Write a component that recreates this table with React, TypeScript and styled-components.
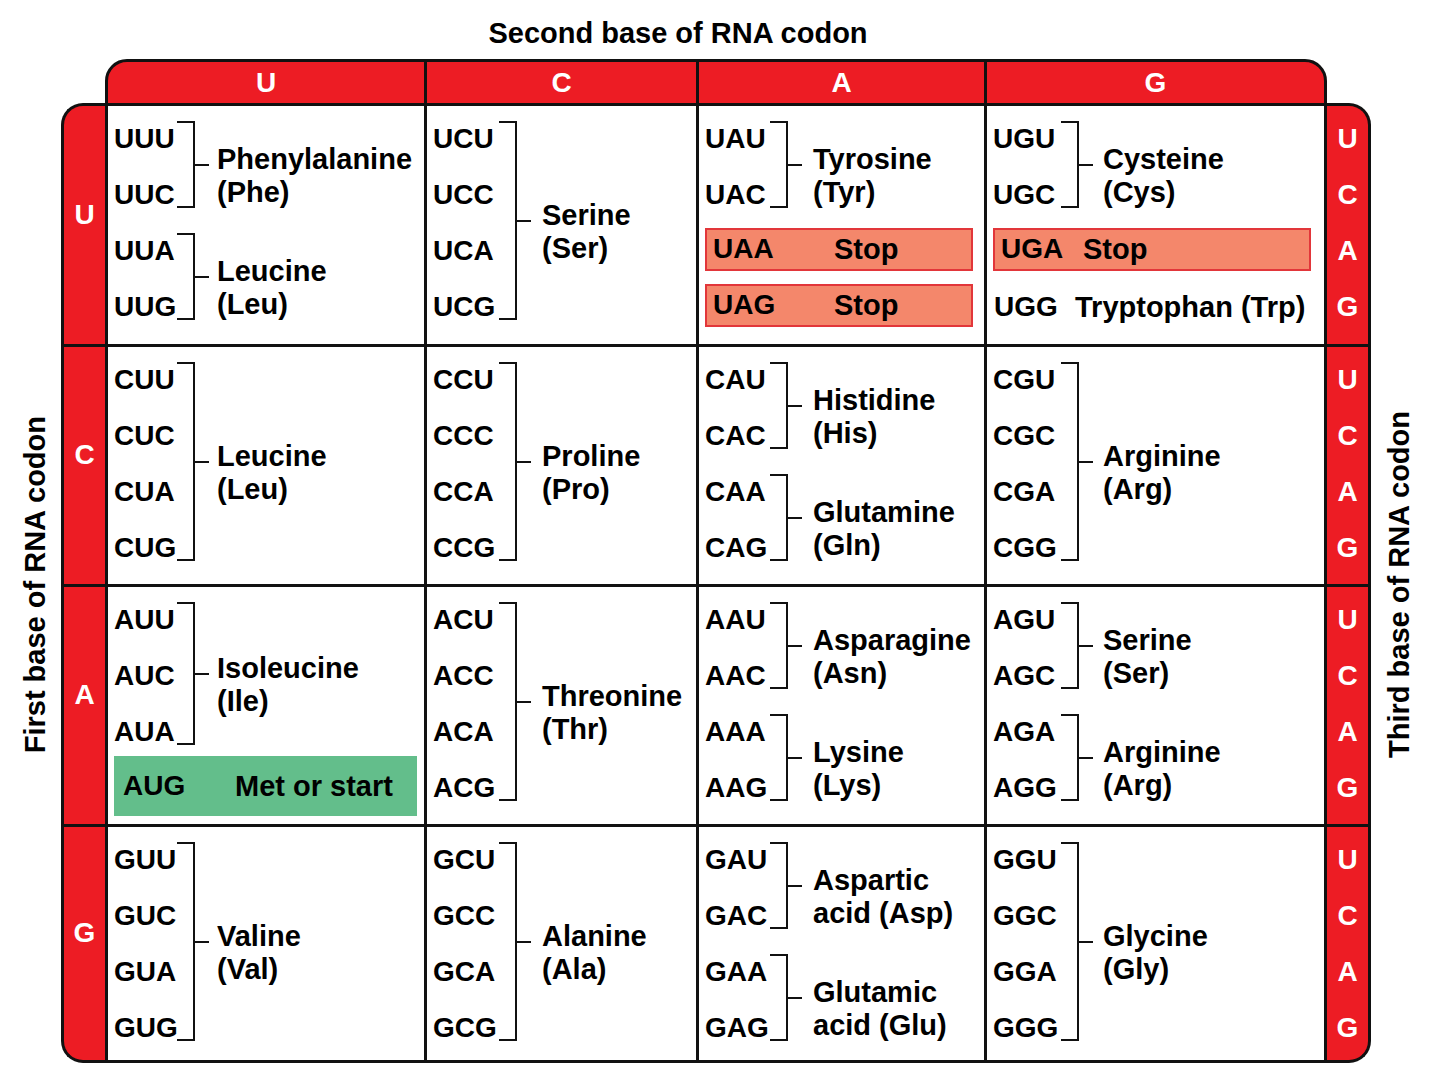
import React from 'react';
import styled, { createGlobalStyle } from 'styled-components';

const RED = '#ED1C24';
const LINE = '#111111';

const GlobalStyle = createGlobalStyle`
  *, *::before, *::after { box-sizing: border-box; }
  html, body { margin: 0; padding: 0; background: #ffffff; }
  body {
    font-family: "Liberation Sans", Arial, Helvetica, sans-serif;
    font-weight: 700;
    color: #000000;
  }
`;

const Page = styled.div`
  display: grid;
  grid-template-columns: 61px 44px 322px 272px 288px 340px 44px 62px;
  grid-template-rows: 59px 47px 241px 240px 240px 236px;
  width: 1433px;
  height: 1071px;
`;

const Title = styled.div`
  grid-column: 1 / -1;
  grid-row: 1;
  text-align: center;
  padding: 17px 77px 0 0;
  font-size: 29px;
  line-height: 33px;
`;

const Header = styled.div`
  grid-column: 3 / 7;
  grid-row: 2;
  display: grid;
  grid-template-columns: 319px 272px 288px 337px;
  background: ${RED};
  border: 3px solid ${LINE};
  border-radius: 22px 22px 0 0;
  overflow: hidden;
`;

const HeaderCell = styled.div<{ $last?: boolean }>`
  display: flex;
  align-items: center;
  justify-content: center;
  color: #ffffff;
  font-size: 28px;
  border-right: ${(p) => (p.$last ? 'none' : `3px solid ${LINE}`)};
`;

const AxisLabel = styled.div<{ $col: number; $pad: number }>`
  grid-column: ${(p) => p.$col};
  grid-row: 3 / 7;
  display: flex;
  align-items: center;
  padding-left: ${(p) => p.$pad}px;
`;

const VerticalText = styled.span`
  writing-mode: vertical-rl;
  transform: rotate(180deg);
  font-size: 29px;
  line-height: 29px;
  white-space: nowrap;
`;

const SideSegment = styled.div<{ $side: 'left' | 'right'; $row: number; $first: boolean; $last: boolean }>`
  grid-column: ${(p) => (p.$side === 'left' ? 2 : 7)};
  grid-row: ${(p) => p.$row + 3};
  background: ${RED};
  color: #ffffff;
  font-size: 28px;
  border-bottom: 3px solid ${LINE};
  ${(p) => (p.$side === 'left' ? `border-left: 3px solid ${LINE};` : `border-right: 3px solid ${LINE};`)}
  ${(p) => (p.$first ? `border-top: 3px solid ${LINE}; margin-top: -3px;` : '')}
  border-radius: ${(p) => {
    const r = '22px';
    if (p.$side === 'left') {
      return `${p.$first ? r : 0} 0 0 ${p.$last ? r : 0}`;
    }
    return `0 ${p.$first ? r : 0} ${p.$last ? r : 0} 0`;
  }};
`;

const LeftLetter = styled(SideSegment)`
  display: flex;
  align-items: center;
  justify-content: center;
  padding-bottom: 21px;
`;

const RightLetters = styled(SideSegment)`
  display: grid;
  grid-template-rows: repeat(4, 56px);
  align-content: start;
  justify-items: center;
  align-items: center;
  padding-top: 5px;
`;

const Cell = styled.div<{ $col: number; $row: number }>`
  grid-column: ${(p) => p.$col + 3};
  grid-row: ${(p) => p.$row + 3};
  display: grid;
  grid-template-columns: 1fr;
  grid-template-rows: repeat(4, 56px);
  align-content: start;
  padding: 5px 0 0 6px;
  background: #ffffff;
  border-right: 3px solid ${LINE};
  border-bottom: 3px solid ${LINE};
  ${(p) => (p.$col === 0 ? `border-left: 3px solid ${LINE};` : '')}
  font-size: 28px;
`;

const Group = styled.div<{ $start: number; $span: number }>`
  grid-row: ${(p) => `${p.$start} / span ${p.$span}`};
  display: flex;
  align-items: stretch;
`;

const Codons = styled.div<{ $w: number }>`
  display: flex;
  flex-direction: column;
  width: ${(p) => p.$w}px;
  flex: none;
`;

const Codon = styled.div`
  height: 56px;
  line-height: 56px;
  white-space: nowrap;
`;

const BracketWrap = styled.div`
  display: flex;
  align-items: center;
  margin: 10px 0 15px;
  flex: none;
`;

const BracketLine = styled.div`
  width: 18px;
  align-self: stretch;
  border: 2px solid ${LINE};
  border-left: none;
`;

const Tick = styled.div`
  width: 14px;
  height: 2px;
  background: ${LINE};
`;

const Amino = styled.div<{ $gap: number }>`
  align-self: center;
  padding-top: 18px;
  margin-left: ${(p) => p.$gap}px;
  font-size: 29px;
  line-height: 33px;
  white-space: nowrap;
`;

const AminoLine = styled.div``;

const Highlight = styled.div<{ $row: number; $kind: 'stop' | 'start'; $mr: number }>`
  grid-row: ${(p) => p.$row};
  align-self: center;
  display: flex;
  align-items: center;
  height: ${(p) => (p.$kind === 'stop' ? 43 : 60)}px;
  margin-top: -4px;
  margin-right: ${(p) => p.$mr}px;
  padding-left: ${(p) => (p.$kind === 'stop' ? 6 : 9)}px;
  background: ${(p) => (p.$kind === 'stop' ? '#F4876B' : '#63BE8B')};
  border: ${(p) => (p.$kind === 'stop' ? '2px solid #E2363A' : 'none')};
  white-space: nowrap;
`;

const PlainRow = styled.div<{ $row: number }>`
  grid-row: ${(p) => p.$row};
  display: flex;
  align-items: center;
  padding-left: 1px;
  white-space: nowrap;
`;

const Code = styled.span<{ $w: number }>`
  display: inline-block;
  width: ${(p) => p.$w}px;
  flex: none;
  font-size: 28px;
`;

const Name = styled.span`
  font-size: 29px;
`;

type Item =
  | { kind: 'group'; codons: string[]; label: string[] }
  | { kind: 'stop' | 'start'; code: string; name: string; codeW: number; mr: number }
  | { kind: 'plain'; code: string; name: string; codeW: number };

const g = (codons: string[], label: string[]): Item => ({ kind: 'group', codons, label });
const stop = (code: string, codeW: number, mr: number): Item => ({ kind: 'stop', code, name: 'Stop', codeW, mr });

const BASES = ['U', 'C', 'A', 'G'];
const BRACKET_X = [80, 83, 82, 85];
const LABEL_GAP = [8, 11, 11, 10];

const TABLE: Item[][][] = [
  [
    [g(['UUU', 'UUC'], ['Phenylalanine', '(Phe)']), g(['UUA', 'UUG'], ['Leucine', '(Leu)'])],
    [g(['UCU', 'UCC', 'UCA', 'UCG'], ['Serine', '(Ser)'])],
    [g(['UAU', 'UAC'], ['Tyrosine', '(Tyr)']), stop('UAA', 121, 11), stop('UAG', 121, 11)],
    [
      g(['UGU', 'UGC'], ['Cysteine', '(Cys)']),
      stop('UGA', 82, 13),
      { kind: 'plain', code: 'UGG', name: 'Tryptophan (Trp)', codeW: 81 },
    ],
  ],
  [
    [g(['CUU', 'CUC', 'CUA', 'CUG'], ['Leucine', '(Leu)'])],
    [g(['CCU', 'CCC', 'CCA', 'CCG'], ['Proline', '(Pro)'])],
    [g(['CAU', 'CAC'], ['Histidine', '(His)']), g(['CAA', 'CAG'], ['Glutamine', '(Gln)'])],
    [g(['CGU', 'CGC', 'CGA', 'CGG'], ['Arginine', '(Arg)'])],
  ],
  [
    [
      g(['AUU', 'AUC', 'AUA'], ['Isoleucine', '(Ile)']),
      { kind: 'start', code: 'AUG', name: 'Met or start', codeW: 112, mr: 7 },
    ],
    [g(['ACU', 'ACC', 'ACA', 'ACG'], ['Threonine', '(Thr)'])],
    [g(['AAU', 'AAC'], ['Asparagine', '(Asn)']), g(['AAA', 'AAG'], ['Lysine', '(Lys)'])],
    [g(['AGU', 'AGC'], ['Serine', '(Ser)']), g(['AGA', 'AGG'], ['Arginine', '(Arg)'])],
  ],
  [
    [g(['GUU', 'GUC', 'GUA', 'GUG'], ['Valine', '(Val)'])],
    [g(['GCU', 'GCC', 'GCA', 'GCG'], ['Alanine', '(Ala)'])],
    [g(['GAU', 'GAC'], ['Aspartic', 'acid (Asp)']), g(['GAA', 'GAG'], ['Glutamic', 'acid (Glu)'])],
    [g(['GGU', 'GGC', 'GGA', 'GGG'], ['Glycine', '(Gly)'])],
  ],
];

function CellContent({ items, col }: { items: Item[]; col: number }) {
  let line = 1;
  return (
    <>
      {items.map((it, i) => {
        const start = line;
        if (it.kind === 'group') {
          line += it.codons.length;
          return (
            <Group key={i} $start={start} $span={it.codons.length}>
              <Codons $w={BRACKET_X[col] - 17}>
                {it.codons.map((c) => (
                  <Codon key={c}>{c}</Codon>
                ))}
              </Codons>
              <BracketWrap>
                <BracketLine />
                <Tick />
              </BracketWrap>
              <Amino $gap={LABEL_GAP[col]}>
                {it.label.map((l) => (
                  <AminoLine key={l}>{l}</AminoLine>
                ))}
              </Amino>
            </Group>
          );
        }
        line += 1;
        if (it.kind === 'plain') {
          return (
            <PlainRow key={i} $row={start}>
              <Code $w={it.codeW}>{it.code}</Code>
              <Name>{it.name}</Name>
            </PlainRow>
          );
        }
        return (
          <Highlight key={i} $row={start} $kind={it.kind} $mr={it.mr}>
            <Code $w={it.codeW}>{it.code}</Code>
            <Name>{it.name}</Name>
          </Highlight>
        );
      })}
    </>
  );
}

export default function App() {
  return (
    <>
      <GlobalStyle />
      <Page>
        <Title>Second base of RNA codon</Title>
        <Header>
          {BASES.map((b, i) => (
            <HeaderCell key={b} $last={i === 3}>
              {b}
            </HeaderCell>
          ))}
        </Header>
        <AxisLabel $col={1} $pad={21}>
          <VerticalText>First base of RNA codon</VerticalText>
        </AxisLabel>
        <AxisLabel $col={8} $pad={14}>
          <VerticalText>Third base of RNA codon</VerticalText>
        </AxisLabel>
        {BASES.map((b, r) => (
          <LeftLetter key={`l${b}`} $side="left" $row={r} $first={r === 0} $last={r === 3}>
            {b}
          </LeftLetter>
        ))}
        {BASES.map((b, r) => (
          <RightLetters key={`r${b}`} $side="right" $row={r} $first={r === 0} $last={r === 3}>
            {BASES.map((t) => (
              <span key={t}>{t}</span>
            ))}
          </RightLetters>
        ))}
        {TABLE.map((row, r) =>
          row.map((items, c) => (
            <Cell key={`${r}-${c}`} $row={r} $col={c}>
              <CellContent items={items} col={c} />
            </Cell>
          ))
        )}
      </Page>
    </>
  );
}
